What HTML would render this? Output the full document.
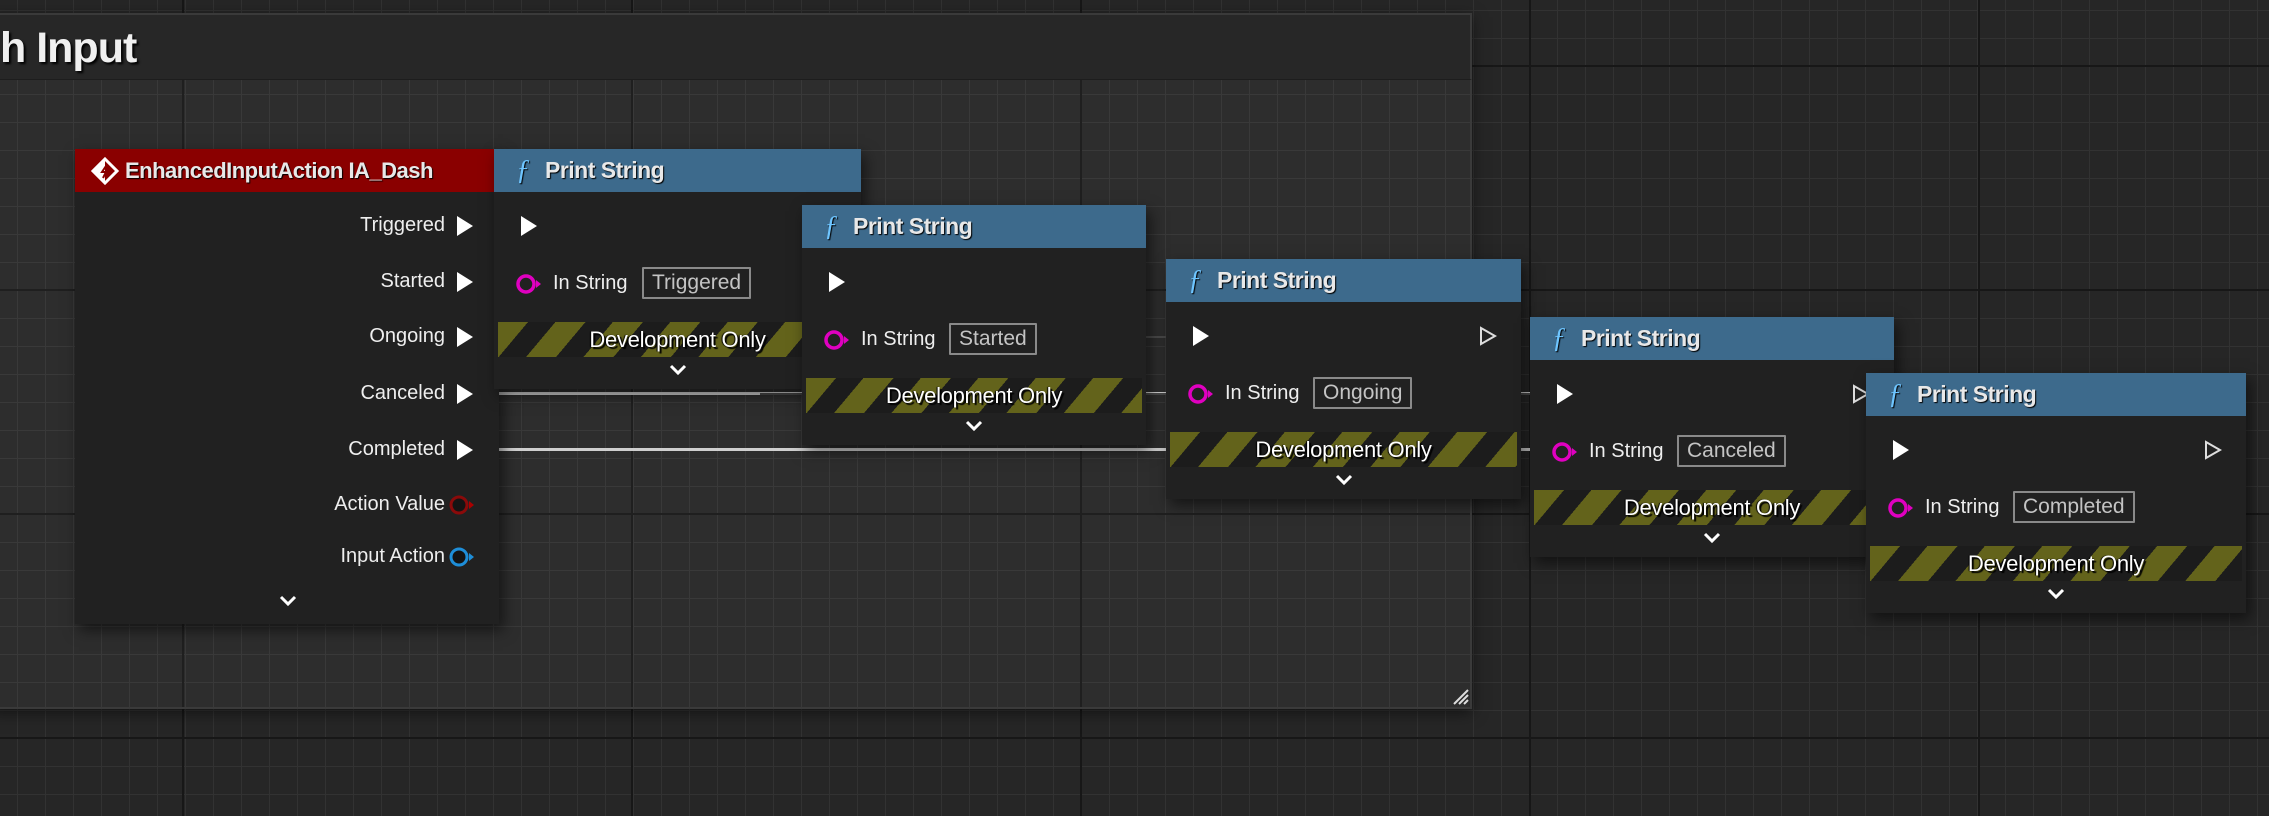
<!DOCTYPE html>
<html><head><meta charset="utf-8"><style>
*{margin:0;padding:0;box-sizing:border-box}
body{width:2269px;height:816px;overflow:hidden;position:relative;font-family:"Liberation Sans",sans-serif;
background-color:#262626;
background-image:linear-gradient(90deg,#171717 0 2px,transparent 2px),linear-gradient(180deg,#171717 0 2px,transparent 2px),linear-gradient(90deg,#323232 0 1px,transparent 1px),linear-gradient(180deg,#323232 0 1px,transparent 1px);
background-size:449px 224px,449px 224px,28px 28px,28px 28px;
background-position:182px 0,0 65px,17px 0,0 10px;}
.abs{position:absolute}
.comment{left:-10px;top:13px;width:1482px;height:696px;background:rgba(255,255,255,0.035);border:2px solid #3a3a3a;box-shadow:0 4px 14px rgba(0,0,0,.5)}
.chead{left:-10px;top:13px;width:1482px;height:67px;background:#272727;border:2px solid #3a3a3a;border-bottom:1px solid #1d1d1d}
.ctitle{left:0;top:24px;font-size:43px;font-weight:bold;color:#f0f0f0;text-shadow:2px 2px 2px #000;letter-spacing:-1px}
.wire{position:absolute;height:2px;background:#4a4a4a}
.wire.hi{height:3px;background:#cfcfcf}
.node{position:absolute;background:#212121;box-shadow:4px 6px 14px rgba(0,0,0,.55)}
.hdr{position:absolute;left:0;top:0;right:0;height:43px;background:#3d6a8c;color:#e8e8e8;font-weight:bold;font-size:23px;letter-spacing:-0.5px;line-height:43px;padding-left:51px;text-shadow:1px 1px 1px #000}
.fi{position:absolute;left:22px;top:0;color:#6ec5ff;font-style:italic;font-family:"Liberation Serif",serif;font-size:28px;font-weight:normal}
.row{position:absolute;left:0;right:0;height:0}
.row>*{position:absolute}
.lbl{color:#eee;font-size:20px;white-space:nowrap}
.box{border:2px solid #8a8a8a;color:#c4c4c4;font-size:21px;padding:2px 8px;white-space:nowrap;border-radius:1px}
.dev{position:absolute;left:4px;right:4px;height:35px;background:#1c1c1c repeating-linear-gradient(130deg,#63631b 0 23px,transparent 23px 44px);color:#fff;font-size:22px;text-align:center;line-height:35px;text-shadow:2px 2px 1px #000,-1px 0 1px #000;letter-spacing:-0.3px}
.chev{position:absolute;left:50%;margin-left:-9px}
</style></head><body>
<div class="abs comment"></div>
<div class="abs chead"></div>
<div class="abs ctitle">h Input</div>
<svg class="abs" style="left:1450px;top:686px" width="20" height="20"><path d="M4 18L18 4M9 18L18 9M14 18L18 14" stroke="#ddd" stroke-width="2"/></svg>

<div class="wire" style="left:474px;top:225px;width:48px;background:repeating-linear-gradient(90deg,#4a4a4a 0 12px,transparent 12px 20px)"></div>
<div class="wire" style="left:474px;top:281px;width:360px"></div>
<div class="wire" style="left:474px;top:336px;width:720px"></div>
<div class="wire hi" style="left:474px;top:392px;width:1085px"></div>
<div class="wire hi" style="left:474px;top:448px;width:1420px"></div>
<div class="wire" style="left:760px;top:393px;width:800px"></div>

<div class="node" style="left:75px;top:149px;width:424px;height:475px">
 <div class="hdr" style="background:#8a0000;padding-left:50px;font-size:22px">
  <svg style="position:absolute;left:16px;top:8px" width="28" height="28" viewBox="0 0 28 28"><path d="M14 2L26 14L14 26L2 14Z" fill="none" stroke="#fff" stroke-width="3"/><path d="M14 2L2 14L14 26Z" fill="#fff"/><path d="M15 9L11 15L15 15L12 21" stroke="#8a0000" stroke-width="2" fill="none"/></svg>
  EnhancedInputAction IA_Dash</div>
 <div class="row" style="top:77px"><span class="lbl" style="right:54px;top:-12px">Triggered</span><svg style="right:25px;top:-10px" width="18" height="20"><path d="M1 0L17 10L1 20Z" fill="#fff"/></svg></div>
 <div class="row" style="top:133px"><span class="lbl" style="right:54px;top:-12px">Started</span><svg style="right:25px;top:-10px" width="18" height="20"><path d="M1 0L17 10L1 20Z" fill="#fff"/></svg></div>
 <div class="row" style="top:188px"><span class="lbl" style="right:54px;top:-12px">Ongoing</span><svg style="right:25px;top:-10px" width="18" height="20"><path d="M1 0L17 10L1 20Z" fill="#fff"/></svg></div>
 <div class="row" style="top:245px"><span class="lbl" style="right:54px;top:-12px">Canceled</span><svg style="right:25px;top:-10px" width="18" height="20"><path d="M1 0L17 10L1 20Z" fill="#fff"/></svg></div>
 <div class="row" style="top:301px"><span class="lbl" style="right:54px;top:-12px">Completed</span><svg style="right:25px;top:-10px" width="18" height="20"><path d="M1 0L17 10L1 20Z" fill="#fff"/></svg></div>
 <div class="row" style="top:356px"><span class="lbl" style="right:54px;top:-12px">Action Value</span><svg style="right:22px;top:-11px" width="28" height="22"><circle cx="10" cy="11" r="8" fill="#141414" stroke="#8a0a0a" stroke-width="3"/><path d="M20 7L25 11L20 15Z" fill="#a00"/></svg></div>
 <div class="row" style="top:408px"><span class="lbl" style="right:54px;top:-12px">Input Action</span><svg style="right:22px;top:-11px" width="28" height="22"><circle cx="10" cy="11" r="8" fill="#141414" stroke="#1e8ed8" stroke-width="3"/><path d="M20 7L25 11L20 15Z" fill="#1e8ed8"/></svg></div>
 <svg style="position:absolute;left:204px;top:446px" width="18" height="12"><path d="M2 2L9 9L16 2" stroke="#fff" stroke-width="3" fill="none"/></svg>
</div>

<div class="node" style="left:494px;top:149px;width:367px;height:240px">
 <div class="hdr"><span class="fi">ƒ</span>Print String</div>
 <div class="row" style="top:77px"><svg style="left:26px;top:-10px" width="18" height="20"><path d="M1 0L17 10L1 20Z" fill="#fff"/></svg></div>
 <div class="row" style="top:135px"><svg style="left:22px;top:-11px" width="28" height="22"><circle cx="10" cy="11" r="8" fill="none" stroke="#e000c0" stroke-width="3.5"/><path d="M20 7L25 11L20 15Z" fill="#e000c0"/></svg><span class="lbl" style="left:59px;top:-12px">In String</span><span class="box" style="left:148px;top:-17px">Triggered</span></div>
 <div class="dev" style="top:173px">Development Only</div>
 <svg class="chev" style="top:215px" width="18" height="12"><path d="M2 2L9 9L16 2" stroke="#fff" stroke-width="3" fill="none"/></svg>
</div>

<div class="node" style="left:802px;top:205px;width:344px;height:240px">
 <div class="hdr"><span class="fi">ƒ</span>Print String</div>
 <div class="row" style="top:77px"><svg style="left:26px;top:-10px" width="18" height="20"><path d="M1 0L17 10L1 20Z" fill="#fff"/></svg></div>
 <div class="row" style="top:135px"><svg style="left:22px;top:-11px" width="28" height="22"><circle cx="10" cy="11" r="8" fill="none" stroke="#e000c0" stroke-width="3.5"/><path d="M20 7L25 11L20 15Z" fill="#e000c0"/></svg><span class="lbl" style="left:59px;top:-12px">In String</span><span class="box" style="left:147px;top:-17px">Started</span></div>
 <div class="dev" style="top:173px">Development Only</div>
 <svg class="chev" style="top:215px" width="18" height="12"><path d="M2 2L9 9L16 2" stroke="#fff" stroke-width="3" fill="none"/></svg>
</div>

<div class="node" style="left:1166px;top:259px;width:355px;height:240px">
 <div class="hdr"><span class="fi">ƒ</span>Print String</div>
 <div class="row" style="top:77px"><svg style="left:26px;top:-10px" width="18" height="20"><path d="M1 0L17 10L1 20Z" fill="#fff"/></svg><svg style="right:24px;top:-10px" width="18" height="20"><path d="M2 2L16 10L2 18Z" fill="none" stroke="#ddd" stroke-width="2"/></svg></div>
 <div class="row" style="top:135px"><svg style="left:22px;top:-11px" width="28" height="22"><circle cx="10" cy="11" r="8" fill="none" stroke="#e000c0" stroke-width="3.5"/><path d="M20 7L25 11L20 15Z" fill="#e000c0"/></svg><span class="lbl" style="left:59px;top:-12px">In String</span><span class="box" style="left:147px;top:-17px">Ongoing</span></div>
 <div class="dev" style="top:173px">Development Only</div>
 <svg class="chev" style="top:215px" width="18" height="12"><path d="M2 2L9 9L16 2" stroke="#fff" stroke-width="3" fill="none"/></svg>
</div>

<div class="node" style="left:1530px;top:317px;width:364px;height:240px">
 <div class="hdr"><span class="fi">ƒ</span>Print String</div>
 <div class="row" style="top:77px"><svg style="left:26px;top:-10px" width="18" height="20"><path d="M1 0L17 10L1 20Z" fill="#fff"/></svg><svg style="right:24px;top:-10px" width="18" height="20"><path d="M2 2L16 10L2 18Z" fill="none" stroke="#ddd" stroke-width="2"/></svg></div>
 <div class="row" style="top:135px"><svg style="left:22px;top:-11px" width="28" height="22"><circle cx="10" cy="11" r="8" fill="none" stroke="#e000c0" stroke-width="3.5"/><path d="M20 7L25 11L20 15Z" fill="#e000c0"/></svg><span class="lbl" style="left:59px;top:-12px">In String</span><span class="box" style="left:147px;top:-17px">Canceled</span></div>
 <div class="dev" style="top:173px">Development Only</div>
 <svg class="chev" style="top:215px" width="18" height="12"><path d="M2 2L9 9L16 2" stroke="#fff" stroke-width="3" fill="none"/></svg>
</div>

<div class="node" style="left:1866px;top:373px;width:380px;height:240px">
 <div class="hdr"><span class="fi">ƒ</span>Print String</div>
 <div class="row" style="top:77px"><svg style="left:26px;top:-10px" width="18" height="20"><path d="M1 0L17 10L1 20Z" fill="#fff"/></svg><svg style="right:24px;top:-10px" width="18" height="20"><path d="M2 2L16 10L2 18Z" fill="none" stroke="#ddd" stroke-width="2"/></svg></div>
 <div class="row" style="top:135px"><svg style="left:22px;top:-11px" width="28" height="22"><circle cx="10" cy="11" r="8" fill="none" stroke="#e000c0" stroke-width="3.5"/><path d="M20 7L25 11L20 15Z" fill="#e000c0"/></svg><span class="lbl" style="left:59px;top:-12px">In String</span><span class="box" style="left:147px;top:-17px">Completed</span></div>
 <div class="dev" style="top:173px">Development Only</div>
 <svg class="chev" style="top:215px" width="18" height="12"><path d="M2 2L9 9L16 2" stroke="#fff" stroke-width="3" fill="none"/></svg>
</div>
</body></html>
